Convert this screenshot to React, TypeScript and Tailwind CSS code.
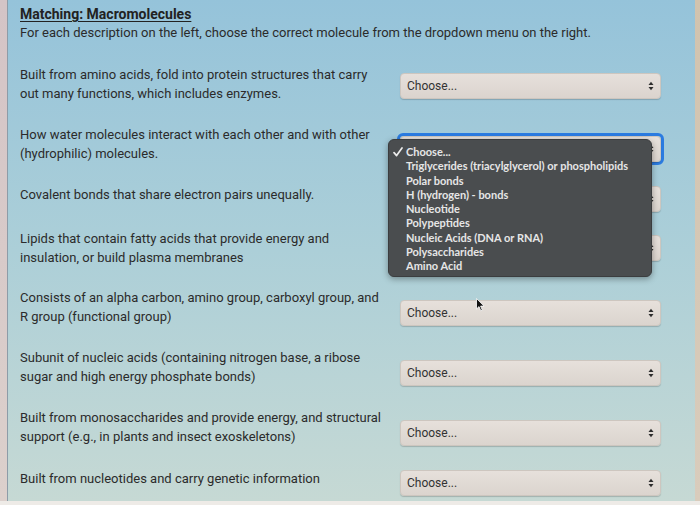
import React from "react";

const rows: { lines: string[]; h: string; mt: string; focused?: boolean; covered?: boolean }[] = [
  { lines: ["Built from amino acids, fold into protein structures that carry", "out many functions, which includes enzymes."], h: "h-[60px]", mt: "mt-[8px]" },
  { lines: ["How water molecules interact with each other and with other", "(hydrophilic) molecules."], h: "h-[60px]", mt: "mt-[8px]", focused: true, covered: true },
  { lines: ["Covalent bonds that share electron pairs unequally."], h: "h-[44px]", mt: "mt-[1px]", covered: true },
  { lines: ["Lipids that contain fatty acids that provide energy and", "insulation, or build plasma membranes"], h: "h-[59px]", mt: "mt-[6px]", covered: true },
  { lines: ["Consists of an alpha carbon, amino group, carboxyl group, and", "R group (functional group)"], h: "h-[60px]", mt: "mt-[12px]" },
  { lines: ["Subunit of nucleic acids (containing nitrogen base, a ribose", "sugar and high energy phosphate bonds)"], h: "h-[60px]", mt: "mt-[12px]" },
  { lines: ["Built from monosaccharides and provide energy, and structural", "support (e.g., in plants and insect exoskeletons)"], h: "h-[61px]", mt: "mt-[12px]" },
  { lines: ["Built from nucleotides and carry genetic information"], h: "h-[32px]", mt: "mt-[1px]" },
];

const options = [
  "Triglycerides (triacylglycerol) or phospholipids",
  "Polar bonds",
  "H (hydrogen) - bonds",
  "Nucleotide",
  "Polypeptides",
  "Nucleic Acids (DNA or RNA)",
  "Polysaccharides",
  "Amino Acid",
];

function Arrows() {
  return (
    <svg width="6" height="10" viewBox="0 0 6 10" className="ml-auto">
      <path d="M0.5 4 L3 0.8 L5.5 4 Z" fill="#2d2d2d" />
      <path d="M0.5 6 L3 9.2 L5.5 6 Z" fill="#2d2d2d" />
    </svg>
  );
}

function Select({ covered }: { covered?: boolean }) {
  return (
    <div className="h-[26px] w-[261px] rounded-[4px] bg-gradient-to-b from-[#e6e0db] to-[#dbd4ce] border border-[#cdc6bf] shadow-[0_1px_1px_rgba(0,0,0,0.18)] flex items-center pl-[6px] pr-[6px] text-[12px] text-[#333] font-['Roboto',sans-serif]">
      {covered ? null : <span>Choose...</span>}
      <Arrows />
    </div>
  );
}

export default function App() {
  return (
    <div className="w-[700px] h-[505px] bg-[#ebe6e2] flex flex-col relative overflow-hidden">
      <div className="flex h-[501px]">
        <div className="w-[7px] bg-gradient-to-b from-[#d4c4c6] to-[#dcd0cc]" />
        <div className="w-[1px] bg-[#8d9ca8]" />
        <div className="flex-1 bg-gradient-to-b from-[#95c3da] via-[#accfd8] to-[#c6d9d4] pl-[12px] pt-[5px] font-['Roboto',sans-serif] text-[#2b2b2b]">
          <div className="text-[14px] leading-[18px] font-bold underline underline-offset-2 text-[#222]">Matching: Macromolecules</div>
          <div className="text-[13px] leading-[19px]">For each description on the left, choose the correct molecule from the dropdown menu on the right.</div>
          <div className="mt-[23px] flex flex-col">
            {rows.map((r, i) => (
              <div key={i} className={`flex items-start ${r.h}`}>
                <div className="w-[368px] text-[13px] leading-[19px]">
                  {r.lines.map((l, j) => (
                    <div key={j} className="whitespace-nowrap">{l}</div>
                  ))}
                </div>
                {r.focused ? (
                  <div className={`${r.mt} ml-[9px] rounded-[6px] border-[3px] border-[#2b7be0]`}>
                    <Select covered={r.covered} />
                  </div>
                ) : (
                  <div className={`${r.mt} ml-[12px]`}>
                    <Select covered={r.covered} />
                  </div>
                )}
              </div>
            ))}
          </div>
        </div>
        <div className="w-[5px] bg-gradient-to-b from-[#d2c3ae] to-[#d9ccbc]" />
      </div>
      <div className="h-[4px] bg-[#eeebe7]" />

      {/* dropdown menu overlay */}
      <div className="absolute left-[388px] top-[139px] w-[264px] h-[138px] rounded-[6px] bg-[#4a4d4f] border border-[#3b3d3f] shadow-[0_2px_6px_rgba(0,0,0,0.35)] pt-[5px] font-['Lato',sans-serif] font-bold text-[11px] leading-[14.3px] text-[#e6e6e6]">
        <div className="flex items-center">
          <span className="w-[17px] pl-[4px] flex items-center">
            <svg width="10" height="10" viewBox="0 0 10 10">
              <path d="M1 5.6 L3.6 8.6 L9 1" fill="none" stroke="#ececec" strokeWidth="1.7" strokeLinecap="round" strokeLinejoin="round" />
            </svg>
          </span>
          <span>Choose...</span>
        </div>
        {options.map((o) => (
          <div key={o} className="pl-[17px] whitespace-nowrap">{o}</div>
        ))}
      </div>

      {/* mouse cursor */}
      <svg className="absolute left-[476px] top-[298px]" width="9" height="14" viewBox="0 0 9 14">
        <path d="M0.5 0.5 L0.5 11 L3 8.6 L4.8 12.8 L6.3 12.1 L4.6 8.1 L8 8.1 Z" fill="#111" stroke="#fff" strokeWidth="0.8" />
      </svg>
    </div>
  );
}
